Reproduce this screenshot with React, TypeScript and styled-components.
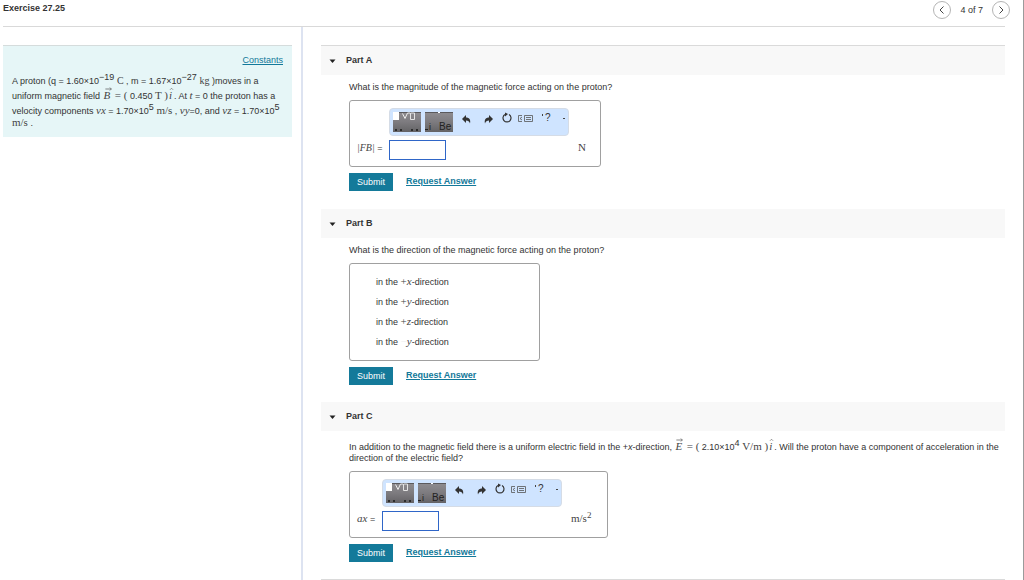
import React, { useState } from 'react';
import styled, { createGlobalStyle } from 'styled-components';

const Global = createGlobalStyle`
  *, *::before, *::after { box-sizing: border-box; }
  html, body, #root { min-height: 100vh; }
  body {
    margin: 0;
    background: #fff;
    color: #333;
    font: 9px/11px "Liberation Sans", Arial, sans-serif;
  }
  h1, h2, p { margin: 0; }
`;

const Page = styled.div`
  display: flex;
  flex-direction: column;
  min-height: 100vh;
  padding-left: 3px;
  border-right: 1px solid #9b9b9b;
`;

const TopBar = styled.header`
  display: flex;
  justify-content: space-between;
  height: 27px;
  margin-right: 18px;
  border-bottom: 1px solid #d9d9d9;
`;

const Title = styled.h1`
  padding-top: 3px;
  font-size: 9px;
  line-height: 11px;
  color: #333;
`;

const Pager = styled.nav`
  display: flex;
  align-items: center;
  gap: 9px;
  height: 20px;
  margin-right: -5px;
`;

const RoundButton = styled.button`
  display: flex;
  align-items: center;
  justify-content: center;
  width: 18px;
  height: 18px;
  padding: 0;
  border: 1px solid #b5b5b5;
  border-radius: 50%;
  background: #fff;
  color: #444;
`;

const Columns = styled.div`
  display: flex;
  flex: 1;
  margin-right: 18px;
`;

const Side = styled.aside`
  flex: none;
  width: 300px;
  padding: 18px 9px 0 0;
  border-right: 2px solid #dde3f1;
`;

const Problem = styled.section`
  padding: 9px 9px 9px;
  border-top: 1px solid #d5dcdc;
  background: #e6f6f7;
`;

const ConstantsRow = styled.div`
  display: flex;
  justify-content: flex-end;
  margin-bottom: 8px;
`;

const Link = styled.a<{ $bold?: boolean }>`
  color: #13799a;
  font-weight: ${p => (p.$bold ? 700 : 400)};
  text-decoration: underline;
`;

const ProblemText = styled.p`
  white-space: nowrap;
`;

const Line = styled.span<{ $short?: boolean }>`
  display: block;
  line-height: ${p => (p.$short ? 9 : 15)}px;
`;

const MathText = styled.span<{ $small?: boolean; $faint?: boolean }>`
  font-family: "Liberation Serif", "Times New Roman", serif;
  font-size: ${p => (p.$small ? 10 : 11)}px;
  line-height: 0;
  color: ${p => (p.$faint ? '#eee' : '#444')};
`;

const MathVar = styled(MathText)`
  font-style: italic;
`;

const Power = styled.sup`
  font-size: 9px;
  line-height: 0;
  vertical-align: 4px;
`;

const Accented = styled(MathVar)`
  position: relative;
  margin: 0 2px 0 1px;
`;

const AccentMark = styled.svg`
  position: absolute;
  left: 1px;
  top: -2px;
  width: 100%;
  height: 4px;
  overflow: visible;
`;

const Main = styled.main`
  flex: 1;
  min-width: 0;
  padding: 18px 0 0 18px;
`;

const PartSection = styled.section<{ $first?: boolean }>`
  margin-bottom: ${p => (p.$first ? 18 : 17)}px;
`;

const PartHeader = styled.h2<{ $first?: boolean }>`
  display: flex;
  align-items: center;
  gap: 9px;
  height: ${p => (p.$first ? 30 : 29)}px;
  padding-left: 8px;
  border-top: ${p => (p.$first ? '1px solid #dadada' : 'none')};
  background: #f8f8f8;
  font-size: 9px;
  line-height: 11px;
`;

const PartBody = styled.form`
  padding: 7px 0 0 28px;
`;

const Question = styled.p<{ $tall?: boolean }>`
  padding-top: ${p => (p.$tall ? 4 : 0)}px;
  margin-bottom: 7px;
`;

const Box = styled.div<{ $width: number }>`
  width: ${p => p.$width}px;
  max-width: 100%;
  border: 1px solid #a0a0a0;
  border-radius: 3px;
`;

const AnswerBox = styled(Box)<{ $label: number }>`
  display: grid;
  grid-template-columns: ${p => p.$label}px 180px 1fr;
  align-content: start;
  row-gap: 4px;
  height: 67px;
  padding: 7px 0 0 7px;
`;

const Toolbar = styled.div`
  display: flex;
  grid-column: 2;
  height: 28px;
  padding: 3px 3px 0;
  border: 1px solid #d5dce6;
  border-radius: 4px;
  background: #cfe4ff;
`;

const ToolButton = styled.button<{ $width: number; $gap?: number; $raised?: boolean }>`
  display: flex;
  flex: none;
  align-items: flex-start;
  width: ${p => p.$width}px;
  height: 20px;
  margin: 0 ${p => p.$gap ?? 0}px 0 0;
  padding: 0;
  border: 0;
  background: ${p => (p.$raised ? 'linear-gradient(#8f8d91, #7d7b7f 50%, #646366)' : 'none')};
  color: #333;
`;

const ToolArt = styled.svg`
  display: block;
`;

const AnswerLabel = styled.label`
  grid-column: 1;
  margin-top: 3px;
  white-space: nowrap;
`;

const AnswerInput = styled.input`
  grid-column: 2;
  width: 57px;
  height: 20px;
  padding: 2px;
  border: 1px solid #2f66c8;
  background: #fff;
  font: inherit;
`;

const Unit = styled.span`
  grid-column: 3;
  margin: 3px 0 0 9px;
  white-space: nowrap;
`;

const Choices = styled(Box)`
  height: 98px;
  padding: 8px 26px;
`;

const Choice = styled.label`
  display: block;
  line-height: 20px;
`;

const HiddenRadio = styled.input`
  position: absolute;
  opacity: 0;
  margin: 0;
`;

const Actions = styled.div`
  display: flex;
  align-items: center;
  gap: 13px;
  margin-top: 6px;
`;

const RequestLink = styled(Link)`
  padding-bottom: 1px;
`;

const Submit = styled.button`
  width: 44px;
  height: 18px;
  padding: 0;
  border: 0;
  background: #147a9a;
  color: #fff;
  font: inherit;
`;

const NextRule = styled.div`
  border-top: 1px solid #dadada;
`;

function Chevron({ right }: { right?: boolean }) {
  return (
    <svg width="8" height="8" viewBox="0 0 8 8" fill="none" stroke="currentColor">
      <path d={right ? 'M2.5 .5 6 4 2.500 7.500' : 'M5.500 .5 2 4l3.500 3.500'} />
    </svg>
  );
}

function Vector({ children }: { children: string }) {
  return (
    <Accented>
      {children}
      <AccentMark viewBox="0 0 6 4" fill="none" stroke="#555" strokeWidth="0.7">
        <path d="M0 2h6M4.5.5 6 2 4.5 3.5" />
      </AccentMark>
    </Accented>
  );
}

function Hat({ children }: { children: string }) {
  return (
    <Accented>
      {children}
      <AccentMark viewBox="0 0 4 4" fill="none" stroke="#555" strokeWidth="0.8">
        <path d="m0 3 2-2 2 2" />
      </AccentMark>
    </Accented>
  );
}

function MathTools() {
  return (
    <Toolbar role="toolbar" aria-label="Equation tools">
      <ToolButton type="button" aria-label="Templates" $width={28} $gap={4} $raised>
        <ToolArt width="28" height="20" viewBox="0 0 28 20">
          <path d="M6 .5h22" stroke="#5b5a5d" />
          <path d="M0 0h6v8H0z" fill="#fff" />
          <path d="M9.500 1.500 12 6.500l2.500-5.500H17" fill="none" stroke="#eee" />
          <path d="M17.500 1h4v6.500h-4z" fill="none" stroke="#e4e4e4" />
          <path d="M2 17h2v2H2zM7 17h2v2H7zM18 17h2v2h-2zM23 17h2v2h-2z" fill="#2c2c2c" />
        </ToolArt>
      </ToolButton>
      <ToolButton type="button" aria-label="Symbols" $width={28} $gap={9} $raised>
        <ToolArt width="28" height="20" viewBox="0 0 28 20">
          <path d="M0 .5h28" stroke="#5b5a5d" />
          <path d="M13 0h2v1h-2z" fill="#fff" />
          <path d="M0 17.500h3" stroke="#222" />
          <text x="4" y="18" fontSize="9" fill="#222">i</text>
          <text x="14" y="18" fontSize="10" fill="#222">Be</text>
        </ToolArt>
      </ToolButton>
      <ToolButton type="button" aria-label="Undo" $width={9} $gap={13}>
        <ToolArt width="9" height="16" viewBox="0 0 9 16">
          <path d="M0 7l4-4v2.500c3 0 5 2 4 6-.5-2-2-3-4-3V11z" fill="#333" />
        </ToolArt>
      </ToolButton>
      <ToolButton type="button" aria-label="Redo" $width={9} $gap={9}>
        <ToolArt width="9" height="16" viewBox="0 0 9 16">
          <path d="M9 7 5 3v2.500c-3 0-5 2-4 6 .5-2 2-3 4-3V11z" fill="#333" />
        </ToolArt>
      </ToolButton>
      <ToolButton type="button" aria-label="Reset" $width={10} $gap={6}>
        <ToolArt width="10" height="16" viewBox="0 0 10 16">
          <path d="M3 2.500a4 4 0 1 0 4 0" fill="none" stroke="#333" strokeWidth="1.200" />
          <path d="M3 .500v4L6 2z" fill="#333" />
        </ToolArt>
      </ToolButton>
      <ToolButton type="button" aria-label="Keyboard" $width={15} $gap={9}>
        <ToolArt width="15" height="16" viewBox="0 0 15 16" fill="none" stroke="#555" strokeWidth="0.800">
          <path d="M4 3.500H.5v6H4M4 5 2 6.500 4 8M6.500 3.500h8v6h-8zM8 5.500h5M8 7.500h5" />
        </ToolArt>
      </ToolButton>
      <ToolButton type="button" aria-label="Help" $width={25}>
        <ToolArt width="25" height="16" viewBox="0 0 25 16">
          <path d="M0 2h1v2H0zM21 6h2v1h-2z" fill="#444" />
          <text x="3" y="9" fontSize="10" fill="#333">?</text>
        </ToolArt>
      </ToolButton>
    </Toolbar>
  );
}

interface PartProps {
  name: string;
  first?: boolean;
  children: React.ReactNode;
}

function Part({ name, first, children }: PartProps) {
  return (
    <PartSection $first={first}>
      <PartHeader $first={first}>
        <svg width="8" height="8" viewBox="0 0 8 8">
          <path d="M.5 2.500h6l-3 3.500z" fill="#222" />
        </svg>
        {name}
      </PartHeader>
      <PartBody onSubmit={e => e.preventDefault()}>
        {children}
        <Actions>
          <Submit type="submit">Submit</Submit>
          <RequestLink href="#" $bold>Request Answer</RequestLink>
        </Actions>
      </PartBody>
    </PartSection>
  );
}

const directions = [
  { sign: '+', axis: 'x' },
  { sign: '+', axis: 'y' },
  { sign: '+', axis: 'z' },
  { sign: '−', axis: 'y' },
];

export default function App() {
  const [choice, setChoice] = useState(-1);
  return (
    <>
      <Global />
      <Page>
        <TopBar>
          <Title>Exercise 27.25</Title>
          <Pager>
            <RoundButton aria-label="Previous"><Chevron /></RoundButton>
            <span>4 of 7</span>
            <RoundButton aria-label="Next"><Chevron right /></RoundButton>
          </Pager>
        </TopBar>
        <Columns>
          <Side>
            <Problem>
              <ConstantsRow><Link href="#">Constants</Link></ConstantsRow>
              <ProblemText>
                <Line>
                  A proton (q = 1.60×10<Power>−19</Power> <MathText $small>C</MathText> , m = 1.67×10<Power>−27</Power> <MathText $small>kg</MathText> )moves in a
                </Line>
                <Line>
                  uniform magnetic field <Vector>B</Vector> <MathText>= (</MathText> 0.450 <MathText>T )</MathText><Hat>i</Hat>. At <MathVar>t</MathVar> = 0 the proton has a
                </Line>
                <Line>
                  velocity components <MathVar>vx</MathVar> = 1.70×10<Power>5</Power> <MathText>m/s</MathText> , <MathVar>vy</MathVar>=0, and <MathVar>vz</MathVar> = 1.70×10<Power>5</Power>
                </Line>
                <Line $short><MathText>m/s</MathText> .</Line>
              </ProblemText>
            </Problem>
          </Side>
          <Main>
            <Part name="Part A" first>
              <Question>What is the magnitude of the magnetic force acting on the proton?</Question>
              <AnswerBox $width={252} $label={32}>
                <MathTools />
                <AnswerLabel htmlFor="force"><MathVar $small>|FB|</MathVar> =</AnswerLabel>
                <AnswerInput id="force" />
                <Unit><MathText>N</MathText></Unit>
              </AnswerBox>
            </Part>
            <Part name="Part B">
              <Question>What is the direction of the magnetic force acting on the proton?</Question>
              <Choices $width={191}>
                {directions.map((d, i) => (
                  <Choice key={i}>
                    <HiddenRadio type="radio" name="direction" checked={choice === i} onChange={() => setChoice(i)} />
                    in the <MathText $faint={d.sign === '−'}>{d.sign}</MathText><MathVar>{d.axis}</MathVar>-direction
                  </Choice>
                ))}
              </Choices>
            </Part>
            <Part name="Part C">
              <Question $tall>
                In addition to the magnetic field there is a uniform electric field in the +<i>x</i>-direction, <Vector>E</Vector> <MathText>= (</MathText> 2.10×10<Power>4</Power> <MathText>V/m )</MathText><Hat>i</Hat>. Will the proton have a component of acceleration in the <span>direction of the electric field?</span>
              </Question>
              <AnswerBox $width={259} $label={25}>
                <MathTools />
                <AnswerLabel htmlFor="acceleration"><MathVar>ax</MathVar> =</AnswerLabel>
                <AnswerInput id="acceleration" />
                <Unit><MathText>m/s<Power>2</Power></MathText></Unit>
              </AnswerBox>
            </Part>
            <NextRule />
          </Main>
        </Columns>
      </Page>
    </>
  );
}
